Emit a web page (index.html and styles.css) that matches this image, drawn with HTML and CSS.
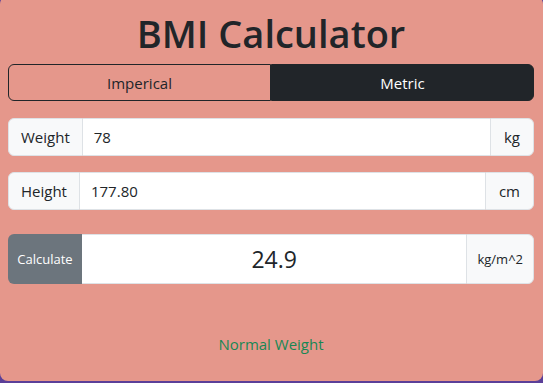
FILE: index.html
```html
<!DOCTYPE html>
<html>
<head>
<meta charset="utf-8">
<link rel="stylesheet" href="styles.css">
</head>
<body>
<div class="card">
  <h1 class="title">BMI Calculator</h1>
  <div class="toggle">
    <button class="tbtn tbtn-off">Imperical</button>
    <button class="tbtn tbtn-on">Metric</button>
  </div>
  <div class="group">
    <span class="addon addon-left">Weight</span>
    <span class="field">78</span>
    <span class="addon addon-right">kg</span>
  </div>
  <div class="group">
    <span class="addon addon-left">Height</span>
    <span class="field">177.80</span>
    <span class="addon addon-right">cm</span>
  </div>
  <div class="group group-lg">
    <button class="calc">Calculate</button>
    <span class="field field-result">24.9</span>
    <span class="addon addon-right addon-small">kg/m^2</span>
  </div>
  <p class="status">Normal Weight</p>
</div>
</body>
</html>
```

FILE: styles.css
```css
html, body {
  margin: 0;
  padding: 0;
  background: #5b3f98;
  height: 383px;
  overflow: hidden;
}
.card {
  box-sizing: border-box;
  margin-top: -4px;
  width: 543px;
  height: 385px;
  background: #e5978b;
  border-radius: 8px;
  padding: 13px 9px 0 8px;
  font-family: "Open Sans", "Noto Sans", sans-serif;
  color: #212529;
}
.title {
  margin: 0 0 7px;
  font-size: 38px;
  line-height: 48px;
  font-weight: 600;
  text-align: center;
  color: #212529;
}
.toggle {
  display: flex;
  height: 37px;
  margin-bottom: 17px;
}
.tbtn {
  flex: 1;
  font-family: inherit;
  font-size: 15px;
  border: 1px solid #212529;
  margin: 0;
  padding: 0;
}
.tbtn-off {
  background: transparent;
  color: #212529;
  border-radius: 6px 0 0 6px;
}
.tbtn-on {
  background: #212529;
  color: #fff;
  border-radius: 0 6px 6px 0;
}
.group {
  display: flex;
  height: 38px;
  margin-bottom: 16px;
  font-size: 15px;
}
.group + .group-lg {
  margin-top: 24px;
  height: 50px;
  margin-bottom: 0;
}
.addon {
  display: flex;
  align-items: center;
  padding: 0 12px;
  background: #f8f9fa;
  border: 1px solid #dee2e6;
}
.addon-left {
  border-radius: 6px 0 0 6px;
}
.addon-right {
  border-radius: 0 6px 6px 0;
  padding: 0 13px;
}
.addon-small {
  font-size: 13px;
  padding: 0 10px;
}
.field {
  flex: 1;
  display: flex;
  align-items: center;
  background: #fff;
  border-top: 1px solid #dee2e6;
  border-bottom: 1px solid #dee2e6;
  padding: 0 11px;
}
.field-result {
  justify-content: center;
  font-size: 23px;
}
.calc {
  width: 74px;
  margin: 0;
  padding: 0;
  border: none;
  background: #6c757d;
  color: #fff;
  font-family: inherit;
  font-size: 13px;
  border-radius: 6px 0 0 6px;
}
.status {
  margin: 50px 0 0;
  text-align: center;
  color: #198754;
  font-size: 15px;
}
```
